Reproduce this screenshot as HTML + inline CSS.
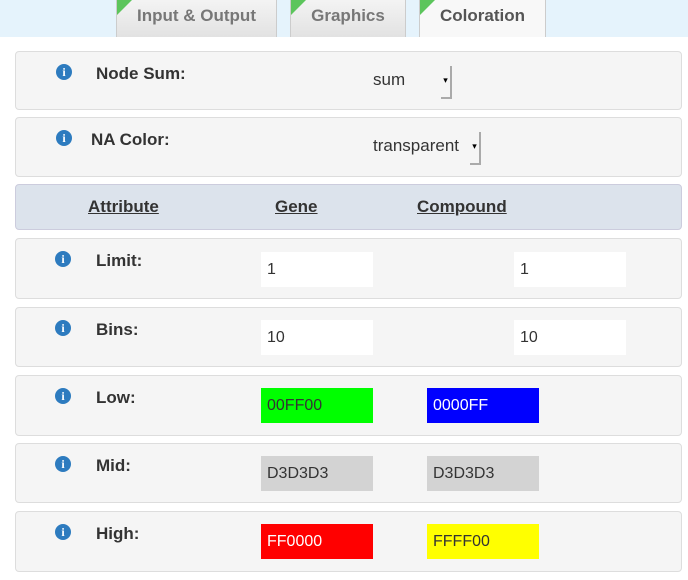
<!DOCTYPE html>
<html><head><style>
body{margin:0;width:688px;height:580px;background:#fff;font-family:"Liberation Sans",sans-serif;position:relative;overflow:hidden}
.top{position:absolute;left:0;top:0;width:688px;height:37px;background:#e5f3fc}
.tab{position:absolute;top:-2px;height:39px;border:1px solid #ccc;border-bottom:none;background:linear-gradient(#f4f4f4,#e2e2e2);box-sizing:border-box;font-weight:bold;font-size:17px;color:#777;text-align:center;line-height:34px;overflow:hidden}
.tab.act{background:#f8f8f8;color:#555}
.tab:before{content:"";position:absolute;left:0;top:0;border-top:16px solid #5cc55c;border-right:16px solid transparent}
.p{position:absolute;left:15px;width:667px;background:#f5f5f5;border:1px solid #ddd;border-radius:4px;box-sizing:border-box}
.lbl{position:absolute;font-weight:bold;font-size:17px;color:#333}
.ic{position:absolute;width:16px;height:16px;border-radius:50%;background:#2d7bbf;color:#fff;font:bold 12px/16px "Liberation Serif",serif;text-align:center}
.in{position:absolute;width:112px;height:35px;background:#fff;font-size:16px;line-height:35px;padding-left:6px;box-sizing:border-box;color:#333}
.sel{position:absolute;font-size:17px;color:#333}
.h{position:absolute;top:197px;font-weight:bold;font-size:17px;color:#333;text-decoration:underline}
</style></head><body>
<div class="top"></div>
<div class="tab" style="left:116px;width:161px">Input &amp; Output</div>
<div class="tab" style="left:290px;width:116px">Graphics</div>
<div class="tab act" style="left:419px;width:127px">Coloration</div>

<div class="p" style="top:51px;height:59px"></div>
<div class="ic" style="left:56px;top:64px">i</div><div class="lbl" style="left:96px;top:64px">Node Sum:</div>
<div class="sel" style="left:373px;top:70px">sum</div>
<div style="position:absolute;left:441px;top:66px;width:9px;height:31px;border-right:2px solid #aaa;border-bottom:2px solid #aaa;font-size:9px;line-height:28px;text-align:center">▾</div>

<div class="p" style="top:117px;height:60px"></div>
<div class="ic" style="left:56px;top:130px">i</div><div class="lbl" style="left:91px;top:130px">NA Color:</div>
<div class="sel" style="left:373px;top:136px">transparent</div>
<div style="position:absolute;left:470px;top:132px;width:9px;height:31px;border-right:2px solid #aaa;border-bottom:2px solid #aaa;font-size:9px;line-height:28px;text-align:center">▾</div>

<div class="p" style="top:184px;height:46px;background:#dce3ec;border-color:#ccd"></div>
<div class="h" style="left:88px">Attribute</div><div class="h" style="left:275px">Gene</div><div class="h" style="left:417px">Compound</div>

<div class="p" style="top:238px;height:61px"></div>
<div class="ic" style="left:55px;top:251px">i</div><div class="lbl" style="left:96px;top:251px">Limit:</div>
<div class="in" style="left:261px;top:252px">1</div><div class="in" style="left:514px;top:252px">1</div>

<div class="p" style="top:307px;height:60px"></div>
<div class="ic" style="left:55px;top:320px">i</div><div class="lbl" style="left:96px;top:320px">Bins:</div>
<div class="in" style="left:261px;top:320px">10</div><div class="in" style="left:514px;top:320px">10</div>

<div class="p" style="top:375px;height:61px"></div>
<div class="ic" style="left:55px;top:388px">i</div><div class="lbl" style="left:96px;top:388px">Low:</div>
<div class="in" style="left:261px;top:388px;background:#00ff00">00FF00</div><div class="in" style="left:427px;top:388px;background:#0000ff;color:#fff">0000FF</div>

<div class="p" style="top:443px;height:60px"></div>
<div class="ic" style="left:55px;top:456px">i</div><div class="lbl" style="left:96px;top:456px">Mid:</div>
<div class="in" style="left:261px;top:456px;background:#d3d3d3">D3D3D3</div><div class="in" style="left:427px;top:456px;background:#d3d3d3">D3D3D3</div>

<div class="p" style="top:511px;height:61px"></div>
<div class="ic" style="left:55px;top:524px">i</div><div class="lbl" style="left:96px;top:524px">High:</div>
<div class="in" style="left:261px;top:524px;background:#ff0000;color:#fff">FF0000</div><div class="in" style="left:427px;top:524px;background:#ffff00">FFFF00</div>
</body></html>
